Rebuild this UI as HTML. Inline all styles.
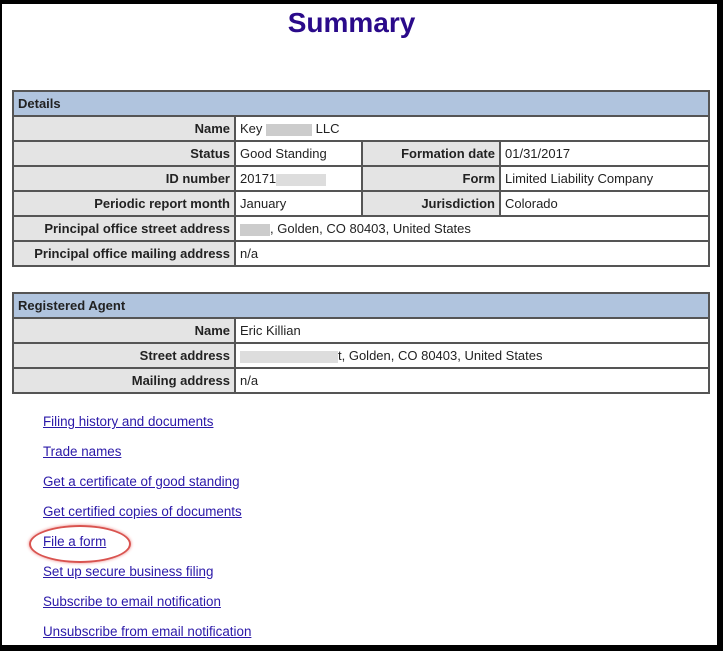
<!DOCTYPE html>
<html><head><style>
html,body{margin:0;padding:0;background:#000;}
#f{position:absolute;left:2px;top:4px;width:715px;height:641px;background:#fff;overflow:hidden;}
h1{position:absolute;left:-8px;width:100%;top:3px;margin:0;text-align:center;font:bold 28px "Liberation Sans",sans-serif;color:#2a0a8a;}
table{position:absolute;left:10px;width:698px;border-collapse:collapse;font:13px "Liberation Sans",sans-serif;color:#222;table-layout:fixed;}
td,th{border:2px solid #555;height:23px;padding:0 4px;white-space:nowrap;}
th.h{background:#b0c4de;text-align:left;font-weight:bold;}
td.l{background:#e4e4e4;text-align:right;font-weight:bold;}
.b{display:inline-block;width:40px;height:12px;background:#ccc;vertical-align:middle;}
.links{position:absolute;left:41px;font:13.4px "Liberation Sans",sans-serif;}
.links a{display:block;text-decoration:underline;height:30px;line-height:15px;color:#2a18a8;}
.ov{position:absolute;left:27px;top:521px;width:98px;height:34px;border:2px solid #d9534f;border-radius:50%;box-shadow:0 0 3px #e88;}
</style></head><body>
<div id="f">
<h1>Summary</h1>
<table style="top:86px">
<colgroup><col style="width:222px"><col style="width:127px"><col style="width:138px"><col></colgroup>
<tr><th class="h" colspan="4">Details</th></tr>
<tr><td class="l">Name</td><td colspan="3">Key <span class="b" style="width:46px"></span> LLC</td></tr>
<tr><td class="l">Status</td><td>Good Standing</td><td class="l">Formation date</td><td>01/31/2017</td></tr>
<tr><td class="l">ID number</td><td>20171<span class="b" style="width:50px;background:#ddd"></span></td><td class="l">Form</td><td>Limited Liability Company</td></tr>
<tr><td class="l">Periodic report month</td><td>January</td><td class="l">Jurisdiction</td><td>Colorado</td></tr>
<tr><td class="l">Principal office street address</td><td colspan="3"><span class="b" style="width:30px"></span>, Golden, CO 80403, United States</td></tr>
<tr><td class="l">Principal office mailing address</td><td colspan="3">n/a</td></tr>
</table>
<table style="top:288px">
<colgroup><col style="width:222px"><col></colgroup>
<tr><th class="h" colspan="2">Registered Agent</th></tr>
<tr><td class="l">Name</td><td>Eric Killian</td></tr>
<tr><td class="l">Street address</td><td><span class="b" style="width:98px;background:#ddd"></span>t, Golden, CO 80403, United States</td></tr>
<tr><td class="l">Mailing address</td><td>n/a</td></tr>
</table>
<div class="links" style="top:410px">
<a>Filing history and documents</a>
<a>Trade names</a>
<a>Get a certificate of good standing</a>
<a>Get certified copies of documents</a>
<a>File a form</a>
<a>Set up secure business filing</a>
<a>Subscribe to email notification</a>
<a>Unsubscribe from email notification</a>
</div>
<div class="ov"></div>
</div>
</body></html>
